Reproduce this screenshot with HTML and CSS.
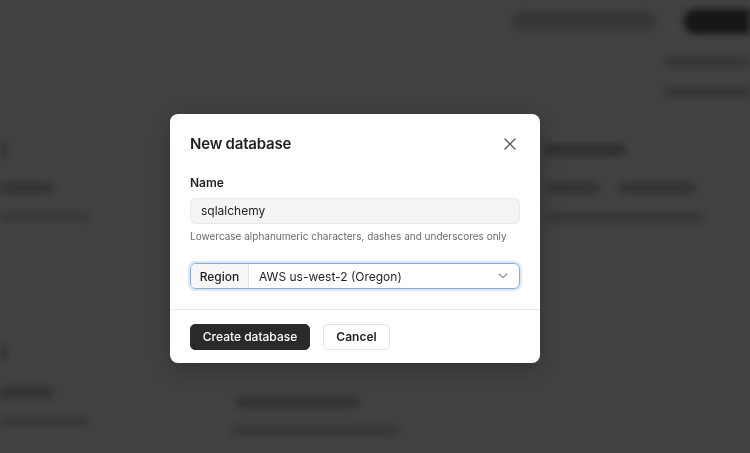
FILE: index.html
```html
<!DOCTYPE html>
<html lang="en">
<head>
<meta charset="utf-8">
<title>New database</title>
<link rel="stylesheet" href="styles.css">
</head>
<body>
<div class="backdrop" aria-hidden="true">
  <div class="bd-header">
    <div class="blob pill-a"></div>
    <div class="blob pill-b"></div>
  </div>
  <div class="bd-body">
    <div class="bd-col bd-left">
      <div class="blob circle c1"></div>
      <div class="blob bar l1"></div>
      <div class="blob bar l2"></div>
      <div class="blob circle c2"></div>
      <div class="blob bar l3"></div>
      <div class="blob bar l4"></div>
    </div>
    <div class="bd-col bd-mid">
      <div class="blob bar m1"></div>
      <div class="blob bar m2"></div>
    </div>
    <div class="bd-col bd-right">
      <div class="blob bar r1"></div>
      <div class="blob bar r2"></div>
      <div class="blob bar r3"></div>
      <div class="bd-row">
        <div class="blob bar r4"></div>
        <div class="blob bar r5"></div>
      </div>
      <div class="blob bar r6"></div>
    </div>
  </div>
</div>

<div class="overlay">
  <div class="modal" role="dialog" aria-labelledby="title">
    <div class="modal-head">
      <h2 id="title" class="modal-title">New database</h2>
      <button class="close" aria-label="Close">
        <svg width="12" height="12" viewBox="0 0 12 12"><path d="M1 1 L11 11 M11 1 L1 11" stroke="#555" stroke-width="1.3" stroke-linecap="round" fill="none"/></svg>
      </button>
    </div>
    <div class="modal-body">
      <label class="label" for="name">Name</label>
      <div class="input">sqlalchemy</div>
      <p class="hint">Lowercase alphanumeric characters, dashes and underscores only</p>
      <div class="select">
        <span class="select-prefix">Region</span>
        <span class="select-value">AWS us-west-2 (Oregon)</span>
        <svg class="chev" width="10" height="6" viewBox="0 0 10 6"><path d="M1 1 L5 4.6 L9 1" stroke="#8a8a8a" stroke-width="1.1" fill="none" stroke-linecap="round" stroke-linejoin="round"/></svg>
      </div>
    </div>
    <div class="modal-foot">
      <button class="btn btn-primary">Create database</button>
      <button class="btn btn-secondary">Cancel</button>
    </div>
  </div>
</div>
</body>
</html>
```

FILE: styles.css
```css
* { box-sizing: border-box; }
html, body {
  margin: 0;
  width: 750px;
  height: 453px;
  overflow: hidden;
  background: #424242;
  font-family: Inter, "Noto Sans", "Liberation Sans", sans-serif;
}

/* blurred page behind the dialog */
.backdrop {
  width: 750px;
  height: 453px;
  display: flex;
  flex-direction: column;
  filter: blur(3.5px);
  overflow: hidden;
}
.blob { background: #333; border-radius: 8px; }
.bd-header {
  height: 40px;
  display: flex;
  justify-content: flex-end;
  align-items: flex-start;
  gap: 28px;
  padding-top: 9px;
  margin-right: -16px;
}
.pill-a { width: 145px; height: 20px; margin-top: 2px; background: #363636; border-radius: 10px; }
.pill-b { width: 82px; height: 25px; background: #161616; border-radius: 12px; }

.bd-body { display: flex; }
.bd-col { display: flex; flex-direction: column; align-items: flex-start; }
.bd-left { width: 100px; margin-left: -12px; }
.bd-mid { width: 180px; margin-left: 142px; }
.bd-right { width: 210px; margin-left: 130px; }
.bd-row { display: flex; gap: 18px; margin-left: 5px; margin-top: 26px; }

.circle { width: 20px; height: 20px; border-radius: 50%; }
.bar { height: 12px; border-radius: 6px; }

.c1 { margin-top: 100px; }
.l1 { width: 66px; margin-top: 22px; }
.l2 { width: 102px; height: 9px; margin-top: 18px; background: #373737; }
.c2 { margin-top: 122px; }
.l3 { width: 66px; margin-top: 24px; }
.l4 { width: 102px; height: 9px; margin-top: 18px; background: #373737; }

.m1 { width: 125px; margin-top: 356px; margin-left: 5px; }
.m2 { width: 170px; height: 10px; margin-top: 18px; background: #373737; }

.r1 { width: 100px; margin-top: 16px; margin-left: 123px; background: #373737; }
.r2 { width: 100px; margin-top: 18px; margin-left: 123px; background: #373737; }
.r3 { width: 84px; margin-top: 46px; margin-left: 3px; background: #303030; }
.r4 { width: 55px; }
.r5 { width: 78px; }
.r6 { width: 160px; height: 10px; margin-top: 18px; margin-left: 5px; background: #373737; }

/* overlay + modal */
.overlay {
  position: fixed;
  inset: 0;
  display: flex;
  align-items: flex-start;
  padding-left: 170px;
  padding-top: 114px;
}
.modal {
  width: 370px;
  background: #fff;
  border-radius: 8px;
  box-shadow: 0 6px 24px rgba(0,0,0,0.25);
  color: #1f1f1f;
}
.modal-head {
  display: flex;
  align-items: center;
  justify-content: space-between;
  padding: 20px 20px 0 20px;
}
.modal-title {
  margin: 0;
  font-size: 15px;
  line-height: 20px;
  font-weight: 600;
  letter-spacing: -0.2px;
  color: #1f1f1f;
}
.close {
  width: 20px;
  height: 20px;
  padding: 0;
  border: 0;
  background: transparent;
  display: flex;
  align-items: center;
  justify-content: center;
}
.modal-body {
  padding: 20px;
  display: flex;
  flex-direction: column;
}
.label {
  font-size: 12px;
  line-height: 18px;
  font-weight: 600;
  color: #1f1f1f;
}
.input {
  margin-top: 6px;
  height: 26px;
  border: 1px solid #e9e9e9;
  background: #f4f4f4;
  border-radius: 6px;
  padding: 0 10px;
  font-size: 12px;
  line-height: 24px;
  color: #1f1f1f;
}
.hint {
  margin: 5px 0 0 0;
  font-size: 10px;
  line-height: 14px;
  color: #6b6b6b;
}
.select {
  margin-top: 20px;
  height: 26px;
  display: flex;
  align-items: stretch;
  border: 1.5px solid #86ace0;
  border-radius: 6px;
  box-shadow: 0 0 0 2px #dce8f8;
  overflow: hidden;
  font-size: 12px;
}
.select-prefix {
  width: 58px;
  display: flex;
  align-items: center;
  justify-content: center;
  background: #f7f7f7;
  border-right: 1px solid #e4e4e4;
  font-weight: 500;
  color: #1f1f1f;
}
.select-value {
  flex: 1;
  display: flex;
  align-items: center;
  padding-left: 10px;
  color: #1f1f1f;
}
.chev { align-self: center; margin-right: 11px; }
.modal-foot {
  border-top: 1px solid #e9e9e9;
  padding: 14px 20px 13px 20px;
  display: flex;
  gap: 13px;
}
.btn {
  height: 26px;
  border-radius: 5px;
  font-family: inherit;
  font-size: 12px;
  line-height: 24px;
  padding: 0;
  cursor: pointer;
}
.btn-primary {
  width: 120px;
  background: #2a2a2a;
  border: 1px solid #2a2a2a;
  color: #fff;
  font-weight: 500;
}
.btn-secondary {
  width: 67px;
  background: #fff;
  border: 1px solid #e4e4e4;
  color: #1f1f1f;
  font-weight: 600;
}
```
